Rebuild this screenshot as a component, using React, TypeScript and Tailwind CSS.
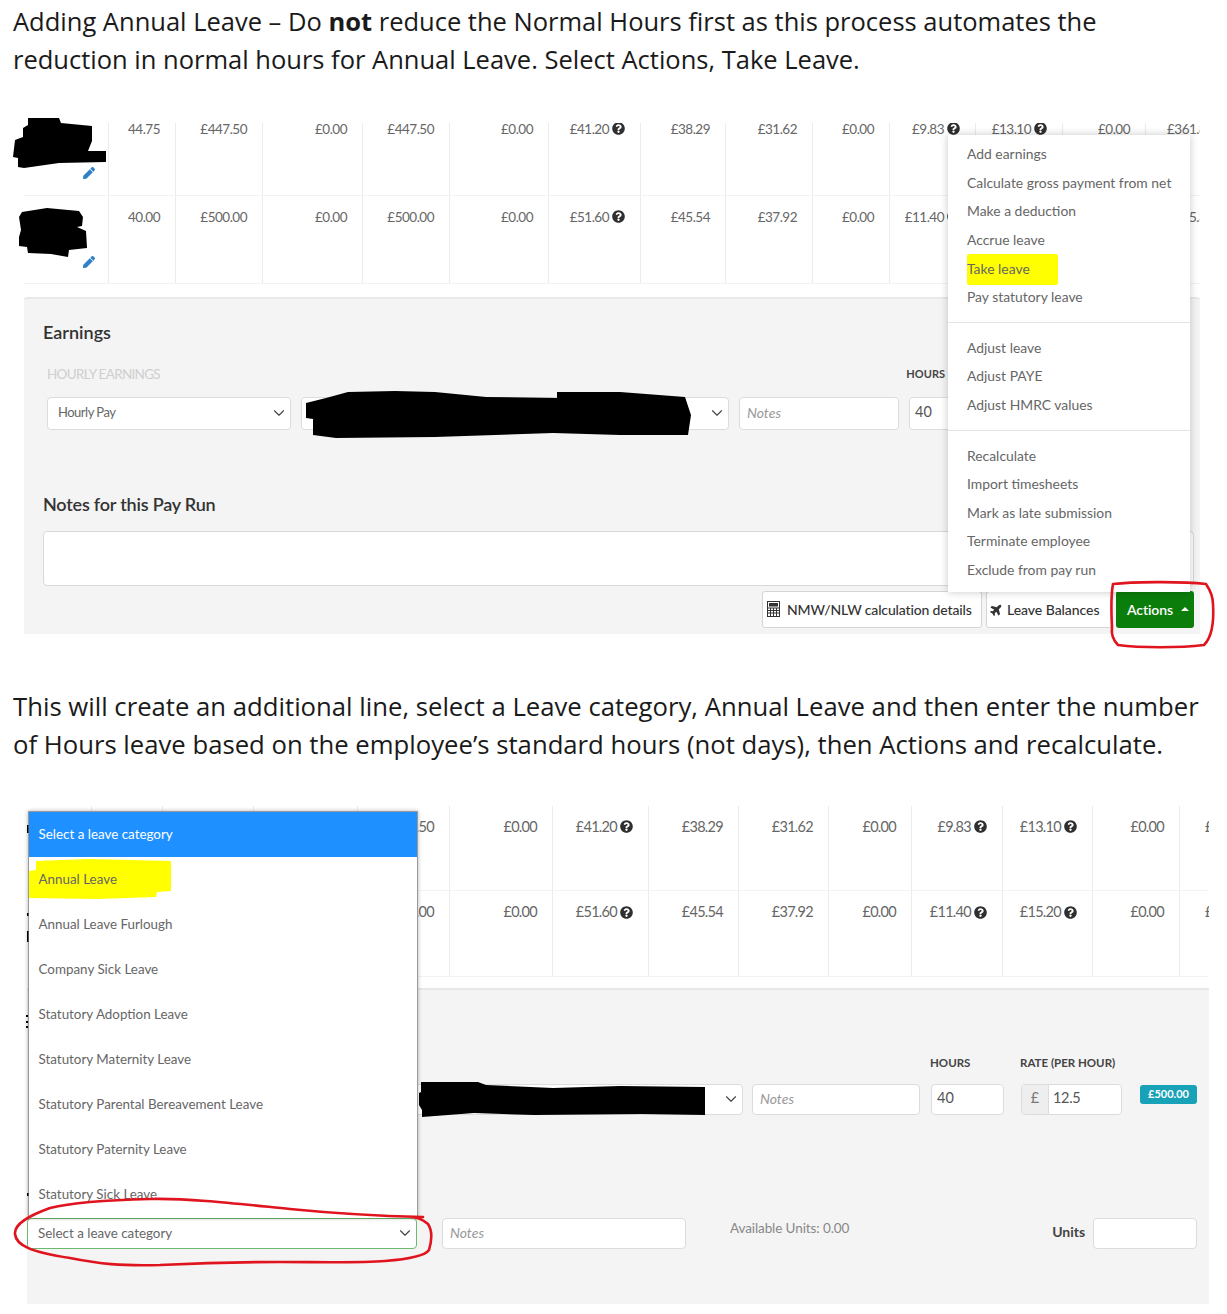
import { ChevronDown } from "lucide-react";
import { FaPlane, FaQuestionCircle, FaPen } from "react-icons/fa";

const APP_FONT = "font-['Lato',sans-serif]";

function Help() {
  return <FaQuestionCircle className="ml-[3px] inline-block shrink-0 text-[#2f2f2f]" size={13} />;
}

function CalcIcon() {
  return (
    <svg width="13" height="16" viewBox="0 0 13 16" fill="none" stroke="#333" strokeWidth="1">
      <rect x="0.5" y="0.5" width="12" height="15" />
      <rect x="2.5" y="2.5" width="8" height="2.5" fill="#333" />
      <path d="M0.5 7H12.5M0.5 9.5H12.5M0.5 12H12.5M3.5 7V15.5M6.5 7V15.5M9.5 7V15.5" />
    </svg>
  );
}

type Cell = { text: string; help?: boolean };

const topCols = [85, 67, 87, 100, 87, 99, 92, 85, 87, 77, 86, 87, 83, 54];
const bottomCols = [65, 71, 91, 104, 92, 103, 96, 90, 90, 83, 91, 90, 87, 29];

const topRows: Cell[][] = [
  [
    { text: "" },
    { text: "44.75" },
    { text: "£447.50" },
    { text: "£0.00" },
    { text: "£447.50" },
    { text: "£0.00" },
    { text: "£41.20", help: true },
    { text: "£38.29" },
    { text: "£31.62" },
    { text: "£0.00" },
    { text: "£9.83", help: true },
    { text: "£13.10", help: true },
    { text: "£0.00" },
    { text: "£361.80" },
  ],
  [
    { text: "" },
    { text: "40.00" },
    { text: "£500.00" },
    { text: "£0.00" },
    { text: "£500.00" },
    { text: "£0.00" },
    { text: "£51.60", help: true },
    { text: "£45.54" },
    { text: "£37.92" },
    { text: "£0.00" },
    { text: "£11.40", help: true },
    { text: "£15.20", help: true },
    { text: "£0.00" },
    { text: "£395.34" },
  ],
];

const bottomRows: Cell[][] = [
  [
    { text: "" },
    { text: "" },
    { text: "" },
    { text: "" },
    { text: "£447.50" },
    { text: "£0.00" },
    { text: "£41.20", help: true },
    { text: "£38.29" },
    { text: "£31.62" },
    { text: "£0.00" },
    { text: "£9.83", help: true },
    { text: "£13.10", help: true },
    { text: "£0.00" },
    { text: "£361.80" },
  ],
  [
    { text: "" },
    { text: "" },
    { text: "" },
    { text: "" },
    { text: "£500.00" },
    { text: "£0.00" },
    { text: "£51.60", help: true },
    { text: "£45.54" },
    { text: "£37.92" },
    { text: "£0.00" },
    { text: "£11.40", help: true },
    { text: "£15.20", help: true },
    { text: "£0.00" },
    { text: "£395.34" },
  ],
];

function PayRow({ cells, cols, height, size, lastPad }: { cells: Cell[]; cols: number[]; height: number; size: string; lastPad: string }) {
  return (
    <div className="flex border-b border-[#f3f3f3]" style={{ height }}>
      {cells.map((c, i) => {
        const last = i === cells.length - 1;
        return (
          <div
            key={i}
            className={`flex shrink-0 items-start overflow-hidden whitespace-nowrap pt-[12px] ${size} ${
              last ? `justify-start ${lastPad}` : "justify-end border-r border-[#ececec] pr-[15px]"
            }`}
            style={{ width: cols[i] }}
          >
            <span className="flex items-center leading-[18px]">
              {c.text}
              {c.help && <Help />}
            </span>
          </div>
        );
      })}
    </div>
  );
}

function Select({ label, width, green, short }: { label: string; width: number; green?: boolean; short?: boolean }) {
  return (
    <div
      className={`flex shrink-0 items-center justify-between rounded-[4px] border bg-white pl-[10px] pr-[2px] text-[#666] ${
        short ? "h-[31px] text-[13.4px]" : "h-[33px] text-[13px] tracking-[-0.5px]"
      } ${green ? "border-[#6cb86c]" : "border-[#dcdcdc]"}`}
      style={{ width }}
    >
      <span className="pb-[1px]">{label}</span>
      <ChevronDown size={18} strokeWidth={1.5} className="text-[#444]" />
    </div>
  );
}

function Box({ width, text, italic, short }: { width: number; text?: string; italic?: boolean; short?: boolean }) {
  return (
    <div
      className={`flex shrink-0 items-center rounded-[4px] border border-[#dcdcdc] bg-white px-[5px] pb-[2px] ${
        short ? "h-[31px]" : "h-[33px]"
      } ${italic ? "pl-[7px] text-[14px] italic text-[#999]" : "text-[14.5px] text-[#555]"}`}
      style={{ width }}
    >
      {text}
    </div>
  );
}

const menuGroups = [
  ["Add earnings", "Calculate gross payment from net", "Make a deduction", "Accrue leave", "Take leave", "Pay statutory leave"],
  ["Adjust leave", "Adjust PAYE", "Adjust HMRC values"],
  ["Recalculate", "Import timesheets", "Mark as late submission", "Terminate employee", "Exclude from pay run"],
];

function ActionsMenu() {
  return (
    <div className="absolute left-[948px] top-[13px] z-10 w-[242px] bg-white pb-[7px] pt-[6px] text-[13.9px] text-[#666] shadow-[0_0_8px_rgba(0,0,0,0.22)]">
      {menuGroups.map((group, g) => (
        <div key={g}>
          {g > 0 && <div className="mb-[11px] mt-[10px] border-t border-[#e4e4e4]" />}
          {group.map((item) => (
            <div key={item} className="relative flex h-[28.6px] items-center pl-[19px]">
              {item === "Take leave" && <div className="absolute left-[19px] top-[-1px] h-[31px] w-[91px] rounded-[2px] bg-[#ffff00]" />}
              <span className="relative pb-[1px]">{item}</span>
            </div>
          ))}
        </div>
      ))}
    </div>
  );
}

const leaveOptions = [
  "Annual Leave",
  "Annual Leave Furlough",
  "Company Sick Leave",
  "Statutory Adoption Leave",
  "Statutory Maternity Leave",
  "Statutory Parental Bereavement Leave",
  "Statutory Paternity Leave",
  "Statutory Sick Leave",
];

function LeaveDropdown() {
  return (
    <div className="absolute left-[1px] top-[5px] z-10 h-[407px] w-[390px] overflow-hidden border-x border-t border-[#9a9a9a] bg-white text-[13.4px] text-[#666] shadow-[0_0_4px_rgba(0,0,0,0.3)]">
      <div className="flex h-[45px] items-center bg-[#1e90ff] pb-[1px] pl-[9.5px] text-white">Select a leave category</div>
      {leaveOptions.map((o) => (
        <div key={o} className="relative flex h-[45.1px] items-center pb-[1px] pl-[9.5px]">
          {o === "Annual Leave" && (
            <svg className="absolute left-0 top-[2px]" width="143" height="40" viewBox="0 0 143 40">
              <path d="M7 2 L60 0 L142 2 L142 32 L128 33 L127 38 L68 40 L0 39 L0 12 L7 11 Z" fill="#ffff00" />
            </svg>
          )}
          <span className="relative">{o}</span>
        </div>
      ))}
    </div>
  );
}

function Overlay() {
  return (
    <svg className="pointer-events-none absolute left-0 top-0 z-20" width="1227" height="1314" viewBox="0 0 1227 1314">
      {/* black redactions */}
      <g fill="#000">
        <polygon points="28,118 59,118 61,123 92,126 92,141 88,151 106,151 106,162 59,163 24,168 18,167 18,158 13,157 15,140 23,137 23,128 28,125" />
        <polygon points="22,212 47,208 79,211 83,217 82,226 77,227 86,231 87,248 69,250 68,257 51,254 28,253 27,247 19,246 19,237 21,230 19,217" />
        <polygon points="306,403 326,398 348,392 395,391 435,392 486,397 557,398 557,392 620,392 685,397 691,415 688,435 620,435 553,433 435,437 336,438 313,435 313,419 306,418" />
        <polygon points="421,1082 478,1082 486,1085 553,1088 620,1086 705,1087 705,1115 642,1114 534,1115 474,1113 422,1117 422,1110 419,1105 419,1093 421,1092" />
        <rect x="27" y="825" width="1.5" height="8" />
        <rect x="27" y="913" width="1.5" height="3" />
        <rect x="27" y="931" width="1.5" height="11" />
        <rect x="26" y="1015" width="2" height="2" />
        <rect x="26" y="1021" width="2" height="2" />
        <rect x="26" y="1026" width="2" height="2" />
        <rect x="27" y="1193" width="1.5" height="3" />
      </g>
      {/* red pen marks */}
      <g fill="none" stroke="#e0141e" strokeWidth="2.6" strokeLinecap="round" strokeLinejoin="round">
        <path d="M1112 627 C1111 608 1111 595 1113 584 C1130 582 1180 581 1206 584 C1210 590 1213 596 1213 604 C1214 620 1213 636 1204 645 C1180 648 1140 648 1118 645 C1113 640 1111 634 1112 627 Z" />
        <path d="M423 1217 C380 1216 330 1213 290 1209 C240 1204 190 1198 150 1199 C105 1200 70 1203 50 1208 C28 1216 14 1224 15 1234 C16 1245 30 1252 70 1258 C100 1264 120 1266 160 1265 C200 1263 240 1262 280 1262 C320 1262 360 1263 385 1261 C410 1259 425 1256 429 1250 C432 1240 432 1230 428 1224 C422 1219 415 1217 411 1217" />
      </g>
    </svg>
  );
}

export default function App() {
  return (
    <div className={`relative h-[1314px] w-[1227px] overflow-hidden bg-white ${APP_FONT}`}>
      <Overlay />

      <p className="whitespace-nowrap pl-[13px] pt-[2px] font-['Open_Sans',sans-serif] text-[25.5px] leading-[38.4px] text-[#1a1a1a]">
        Adding Annual Leave – Do <b>not</b> reduce the Normal Hours first as this process automates the
        <br />
        reduction in normal hours for Annual Leave. Select Actions, Take Leave.
      </p>

      {/* first capture */}
      <div className="relative mt-[43px] h-[512px] w-[1200px]">
        <div className="h-[1px]" />
        <div className="h-[162px] overflow-hidden pl-[24px] text-[#666]">
          <div className="mt-[-15px]">
            {topRows.map((r, i) => (
              <PayRow key={i} cells={r} cols={topCols} height={88} size="text-[13.5px] tracking-[-0.5px]" lastPad="pl-[21px]" />
            ))}
          </div>
        </div>
        <FaPen className="absolute left-[83px] top-[45px] text-[#2f80c8]" size={12} />
        <FaPen className="absolute left-[83px] top-[134px] text-[#2f80c8]" size={12} />

        <div className="ml-[24px] mt-[12px] h-[337px] rounded-t-[3px] border-t-2 border-[#e8e8e8] bg-[#f4f4f4] text-[#666]">
          <h2 className="pl-[19px] pt-[21px] text-[18px] font-semibold leading-[24px] text-[#333]">Earnings</h2>
          <div className="flex items-center justify-between pl-[23px] pr-[255px] pt-[21px]">
            <span className="text-[13.5px] leading-[18px] tracking-[-0.7px] text-[#cfcfcf]">HOURLY EARNINGS</span>
            <span className="text-[11px] font-bold leading-[18px] text-[#444]">HOURS</span>
          </div>
          <div className="flex gap-[10px] pl-[23px] pt-[14px]">
            <Select label="Hourly Pay" width={244} />
            <Select label="" width={428} />
            <Box width={160} text="Notes" italic />
            <Box width={85} text="40" />
          </div>
          <h2 className="pl-[19px] pt-[62px] text-[18px] font-semibold leading-[24px] tracking-[-0.2px] text-[#333]">Notes for this Pay Run</h2>
          <div className="ml-[19px] mt-[15px] h-[55px] w-[1151px] rounded-[4px] border border-[#d8d8d8] bg-white" />
          <div className="flex justify-end gap-[4px] pr-[6px] pt-[5px]">
            <button className="flex h-[37px] w-[220px] items-center gap-[7px] whitespace-nowrap rounded-[3px] border border-[#d5d5d5] bg-white pl-[4px] text-[14px] font-medium tracking-[-0.15px] text-[#333]">
              <CalcIcon />
              NMW/NLW calculation details
            </button>
            <button className="flex h-[37px] w-[126px] items-center gap-[4px] whitespace-nowrap rounded-[3px] border border-[#d5d5d5] bg-white pl-[3px] text-[14px] font-medium tracking-[-0.05px] text-[#333]">
              <FaPlane size={13} className="-rotate-45 text-[#333]" />
              Leave Balances
            </button>
            <button className="flex h-[37px] w-[78px] items-center gap-[8px] whitespace-nowrap rounded-[3px] bg-[#0b7d0b] pl-[11px] text-[14px] font-semibold tracking-[-0.1px] text-white">
              Actions
              <span className="h-0 w-0 border-x-[4px] border-b-[4px] border-x-transparent border-b-white" />
            </button>
          </div>
        </div>
        <ActionsMenu />
      </div>

      <p className="mt-[54px] whitespace-nowrap pl-[13px] font-['Open_Sans',sans-serif] text-[25.7px] leading-[38.4px] text-[#1a1a1a]">
        This will create an additional line, select a Leave category, Annual Leave and then enter the number
        <br />
        of Hours leave based on the employee’s standard hours (not days), then Actions and recalculate.
      </p>

      {/* second capture */}
      <div className="relative ml-[27px] mt-[41px] h-[498px] w-[1182px]">
        <div className="h-[171px] overflow-hidden text-[#666]">
          {bottomRows.map((r, i) => (
            <PayRow key={i} cells={r} cols={bottomCols} height={85.5} size="text-[14.5px] tracking-[-0.7px]" lastPad="pl-[25px]" />
          ))}
        </div>
        <div className="mt-[11px] h-[316px] border-t-2 border-[#e8e8e8] bg-[#f4f4f4] text-[#666]">
          <div className="flex pl-[903px] pt-[64px] text-[11.5px] font-bold leading-[18px] text-[#444]">
            <span className="w-[90px]">HOURS</span>
            <span>RATE (PER HOUR)</span>
          </div>
          <div className="flex items-start pl-[320px] pt-[12px]">
            <Select label="" width={396} short />
            <div className="ml-[9px]">
              <Box width={168} text="Notes" italic short />
            </div>
            <div className="ml-[11px]">
              <Box width={73} text="40" short />
            </div>
            <div className="ml-[17px] flex h-[31px] w-[101px] overflow-hidden rounded-[4px] border border-[#dcdcdc] bg-white text-[14.5px] text-[#555]">
              <span className="flex w-[27px] items-center justify-center border-r border-[#dcdcdc] bg-[#eeeeee] pb-[2px] text-[#777]">£</span>
              <span className="flex items-center pb-[2px] pl-[4px] tracking-[-0.3px]">12.5</span>
            </div>
            <span className="ml-[18px] mt-[1px] flex h-[19px] w-[57px] items-center justify-center rounded-[3px] bg-[#17a2b8] text-[11px] font-bold text-white">
              £500.00
            </span>
          </div>
          <div className="flex items-start pt-[103px]">
            <Select label="Select a leave category" width={390} green short />
            <div className="ml-[25px]">
              <Box width={244} text="Notes" italic short />
            </div>
            <span className="ml-[44px] text-[13.5px] leading-[20px] tracking-[-0.1px] text-[#888]">Available Units: 0.00</span>
            <span className="ml-[203px] mt-[4px] text-[14px] font-bold leading-[20px] text-[#444]">Units</span>
            <div className="ml-[8px]">
              <Box width={104} short />
            </div>
          </div>
        </div>
        <LeaveDropdown />
      </div>
    </div>
  );
}
